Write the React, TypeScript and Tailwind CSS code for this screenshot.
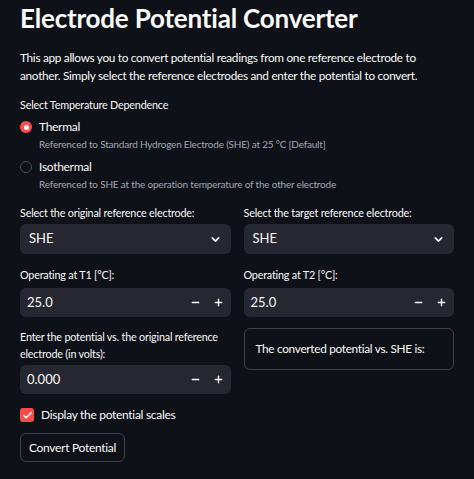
import React, { useState } from 'react';
import { ChevronDown, Minus, Plus, Check } from 'lucide-react';

const font = { fontFamily: 'Lato, "Open Sans", sans-serif' };

function NumberInput({ value }: { value: string }) {
  return (
    <div className="flex items-center h-[29px] rounded-md bg-[#262730] pl-[7px] pr-[1px] text-[13px] text-[#fafafa]">
      <span className="flex-1">{value}</span>
      <button className="w-[23px] flex justify-center text-[#fafafa]">
        <Minus className="w-[11px] h-[11px]" strokeWidth={3} />
      </button>
      <button className="w-[23px] flex justify-center text-[#fafafa]">
        <Plus className="w-[11px] h-[11px]" strokeWidth={3} />
      </button>
    </div>
  );
}

function SelectBox({ value }: { value: string }) {
  return (
    <div className="flex items-center h-[30px] rounded-md bg-[#262730] pl-[9px] pr-[9px] text-[13px] text-[#fafafa]">
      <span className="flex-1">{value}</span>
      <ChevronDown className="w-[13px] h-[13px]" strokeWidth={3} />
    </div>
  );
}

const label = 'text-[10.8px] leading-[16px] tracking-[-0.2px]';

export default function App() {
  const [mode, setMode] = useState('thermal');
  const [show, setShow] = useState(true);

  return (
    <div className="min-h-screen bg-[#0e1117] text-[#fafafa] px-[20px] pt-0 pb-6" style={font}>
      <h1 className="text-[26px] font-bold leading-[36px] tracking-[-0.2px]">Electrode Potential Converter</h1>

      <p className="mt-[13px] text-[11.8px] leading-[18px] tracking-[-0.3px] text-[#fafafa]">
        This app allows you to convert potential readings from one reference electrode to another. Simply select the
        reference electrodes and enter the potential to convert.
      </p>

      <div className={`mt-[12px] ${label}`}>Select Temperature Dependence</div>

      <div className="mt-[5px] flex flex-col gap-[5px]">
        {[
          { id: 'thermal', label: 'Thermal', cap: 'Referenced to Standard Hydrogen Electrode (SHE) at 25 °C [Default]' },
          { id: 'isothermal', label: 'Isothermal', cap: 'Referenced to SHE at the operation temperature of the other electrode' },
        ].map((o) => (
          <div key={o.id} className="flex gap-[7px] cursor-pointer" onClick={() => setMode(o.id)}>
            <div className="pt-[3px]">
              {mode === o.id ? (
                <div className="w-[12px] h-[12px] rounded-full bg-[#ff4b4b] flex items-center justify-center">
                  <div className="w-[5px] h-[5px] rounded-full bg-white" />
                </div>
              ) : (
                <div className="w-[12px] h-[12px] rounded-full border border-[#4a4c57]" />
              )}
            </div>
            <div>
              <div className="text-[12px] leading-[18px] tracking-[-0.3px]">{o.label}</div>
              <div className="text-[10px] leading-[17px] tracking-[-0.2px] text-[#a3a8b4]">{o.cap}</div>
            </div>
          </div>
        ))}
      </div>

      <div className="mt-[12px] grid grid-cols-2 gap-x-[13px]">
        <div>
          <div className={`${label} mb-[3px]`}>Select the original reference electrode:</div>
          <SelectBox value="SHE" />
        </div>
        <div>
          <div className={`${label} mb-[3px]`}>Select the target reference electrode:</div>
          <SelectBox value="SHE" />
        </div>

        <div className="mt-[13px]">
          <div className={`${label} mb-[5px]`}>Operating at T1 [°C]:</div>
          <NumberInput value="25.0" />
        </div>
        <div className="mt-[13px]">
          <div className={`${label} mb-[5px]`}>Operating at T2 [°C]:</div>
          <NumberInput value="25.0" />
        </div>

        <div className="mt-[11px]">
          <div className="text-[10.8px] leading-[17px] tracking-[-0.2px] mb-[3px]">
            Enter the potential vs. the original reference electrode (in volts):
          </div>
          <NumberInput value="0.000" />
        </div>
        <div className="mt-[11px]">
          <div className="h-[42px] rounded-md border border-[#3d4049] flex items-center px-[11px] text-[11.8px] tracking-[-0.3px]">
            The converted potential vs. SHE is:
          </div>
        </div>
      </div>

      <div className="mt-[12px] flex items-center gap-[7px] cursor-pointer" onClick={() => setShow(!show)}>
        <div
          className={
            show
              ? 'w-[14px] h-[14px] rounded-[3px] bg-[#ff4b4b] flex items-center justify-center'
              : 'w-[14px] h-[14px] rounded-[3px] border border-[#4a4c57]'
          }
        >
          {show && <Check className="w-[11px] h-[11px] text-white" strokeWidth={3.5} />}
        </div>
        <span className="text-[12px] leading-[18px] tracking-[-0.3px]">Display the potential scales</span>
      </div>

      <button className="mt-[9px] h-[29px] w-[105px] rounded-md border border-[#3d4049] bg-[#0e1117] text-[12px] tracking-[-0.3px]">
        Convert Potential
      </button>
    </div>
  );
}
